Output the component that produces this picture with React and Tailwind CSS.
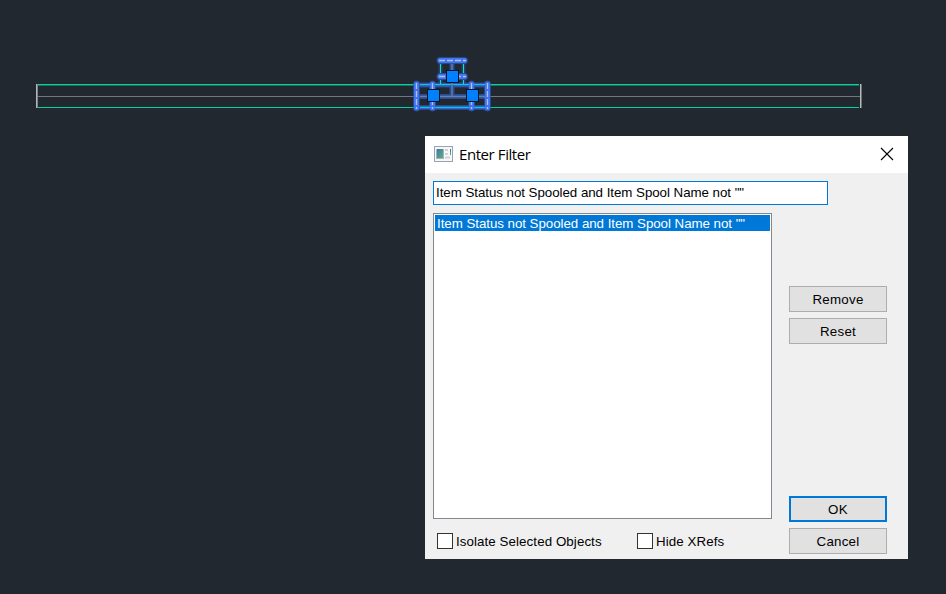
function Highlight({ d }) {
  return (
    <g fill="none" strokeLinecap="round">
      <path d={d} stroke="#2c55a8" strokeWidth="7" opacity="0.7" />
      <path d={d} stroke="#3d74f5" strokeWidth="5" />
    </g>
  );
}

function PipeDrawing() {
  return (
    <svg className="block" width="946" height="130" viewBox="0 0 946 130">
      {/* straight pipe */}
      <g>
        <rect x="38" y="84" width="821" height="1" fill="#00d5a0" />
        <rect x="38" y="85" width="821" height="1" fill="#1f705f" />
        <rect x="38" y="96" width="822" height="1" fill="#73777b" />
        <rect x="38" y="107" width="821" height="1" fill="#00d5a0" />
        <rect x="36" y="84" width="1" height="24" fill="#b4b5b6" />
        <rect x="37" y="84" width="1" height="24" fill="#808488" />
        <rect x="860" y="84" width="1" height="24" fill="#b9babb" />
        <rect x="861" y="84" width="1" height="24" fill="#6d7175" />
      </g>
      {/* selected tee */}
      <g fill="none">
        <path d="M417 85H487M417 107.5H487" stroke="#2c55a8" strokeWidth="5" opacity="0.7" />
        <path d="M417 85H487M417 107.5H487" stroke="#3163cf" strokeWidth="3" />
        <path d="M417 96.5H487M452 61V96" stroke="#2c55a8" strokeWidth="5" opacity="0.8" />
        <path d="M440.5 61V84M463.5 61V84" stroke="#28529e" strokeWidth="4" opacity="0.6" />
      </g>
      <Highlight d="M416.5 84V108" />
      <Highlight d="M432.5 84V108" />
      <Highlight d="M471.5 84V108" />
      <Highlight d="M487.5 84V108" />
      <Highlight d="M440 60.5H464.5" />
      <Highlight d="M440 76.5H464.5" />
      <g fill="none">
        <path d="M420 84.5H430M435 84.5H469M474 84.5H485M420 107.5H430M435 107.5H469M474 107.5H485" stroke="#08c8dd" />
        <path d="M440.5 64V73M440.5 80V84M463.5 64V73M463.5 80V84" stroke="#08e3bd" />
        <path d="M420 96.5H485M452 64V96" stroke="#667fb8" strokeWidth="1.3" />
        <path
          d="M416.5 83V109M432.5 83V109M471.5 83V109M487.5 83V109M439 60.5H466M439 76.5H466"
          stroke="#b5c1df"
          strokeWidth="1.3"
          strokeDasharray="6 2"
        />
      </g>
      <g fill="#0080ff" stroke="#081727">
        <rect x="446.5" y="70.5" width="12" height="12" />
        <rect x="427.5" y="89.5" width="12" height="12" />
        <rect x="466.5" y="89.5" width="12" height="12" />
      </g>
    </svg>
  );
}

function AppIcon() {
  return (
    <svg className="-mt-px" width="19" height="16" viewBox="0 0 19 16">
      <defs>
        <linearGradient id="screen" x1="0" y1="0" x2="1" y2="1">
          <stop offset="0" stopColor="#4a72b0" />
          <stop offset="1" stopColor="#55b574" />
        </linearGradient>
      </defs>
      <rect x="0.5" y="0.5" width="18" height="15" fill="#f5f7f9" stroke="#9ba3ae" />
      <rect x="2" y="3" width="8" height="10" fill="#a6b3bd" />
      <rect x="3" y="3" width="6" height="9" fill="url(#screen)" />
      <path d="M11 4H14M11 8H14M11 11.5H16" stroke="#d0d3d7" strokeWidth="2" />
      <path d="M16.5 3V6" stroke="#4a78c8" />
      <path d="M16.5 6V9" stroke="#50ad68" />
    </svg>
  );
}

function Button({ children, primary }) {
  return (
    <button
      className={`h-[26px] w-[98px] bg-[#e1e1e1] pt-px text-center tracking-[0.25px] ${
        primary ? "border-2 border-[#0078d7] leading-[21px]" : "border border-[#adadad] leading-[23px]"
      }`}
    >
      {children}
    </button>
  );
}

function CheckBox({ label }) {
  return (
    <label className="flex h-4 w-[200px] shrink-0 items-center gap-[3px] whitespace-nowrap">
      <span className="size-4 shrink-0 border border-[#333] bg-white" />
      <span className="pt-px tracking-[0.08px]">{label}</span>
    </label>
  );
}

const FILTER = 'Item Status not Spooled and Item Spool Name not ""';

export default function App() {
  return (
    <div className="relative h-[594px] w-[946px] overflow-hidden bg-[#222830]">
      <PipeDrawing />
      <section className="absolute left-[425px] top-[136px] flex h-[423px] w-[483px] flex-col bg-[#f0f0f0] font-['Liberation_Sans',Arial,sans-serif] text-[13.33px] text-black">
        <header className="flex h-[37px] shrink-0 items-center bg-white pl-[9px] pr-[14px]">
          <AppIcon />
          <h1 className="-mt-px ml-1.5 font-['Open_Sans','Noto_Sans',sans-serif] text-[15px] tracking-[-0.42px]">
            Enter Filter
          </h1>
          <svg className="-mt-[2px] ml-auto" width="14" height="14" viewBox="0 0 14 14">
            <path d="M1 1L13 13M13 1L1 13" stroke="#000" strokeWidth="1.1" fill="none" />
          </svg>
        </header>
        <div className="flex flex-1 px-2 pt-2">
          <div className="w-[356px] shrink-0">
            <div className="h-6 w-[395px] whitespace-nowrap border border-[#0078d7] bg-white pl-0.5 leading-[22px] tracking-[-0.045px]">
              {FILTER}
            </div>
            <div className="mt-2 h-[306px] w-[339px] border border-[#828790] bg-white p-px">
              <div className="h-4 whitespace-nowrap bg-[#0078d7] pl-0.5 leading-[17px] tracking-[-0.045px] text-white">
                {FILTER}
              </div>
            </div>
            <div className="ml-1 mt-3.5 flex">
              <CheckBox label="Isolate Selected Objects" />
              <CheckBox label="Hide XRefs" />
            </div>
          </div>
          <div className="flex flex-col gap-1.5 pt-[105px]">
            <Button>Remove</Button>
            <Button>Reset</Button>
            <div className="mt-[146px] flex flex-col gap-1.5">
              <Button primary>OK</Button>
              <Button>Cancel</Button>
            </div>
          </div>
        </div>
      </section>
    </div>
  );
}
